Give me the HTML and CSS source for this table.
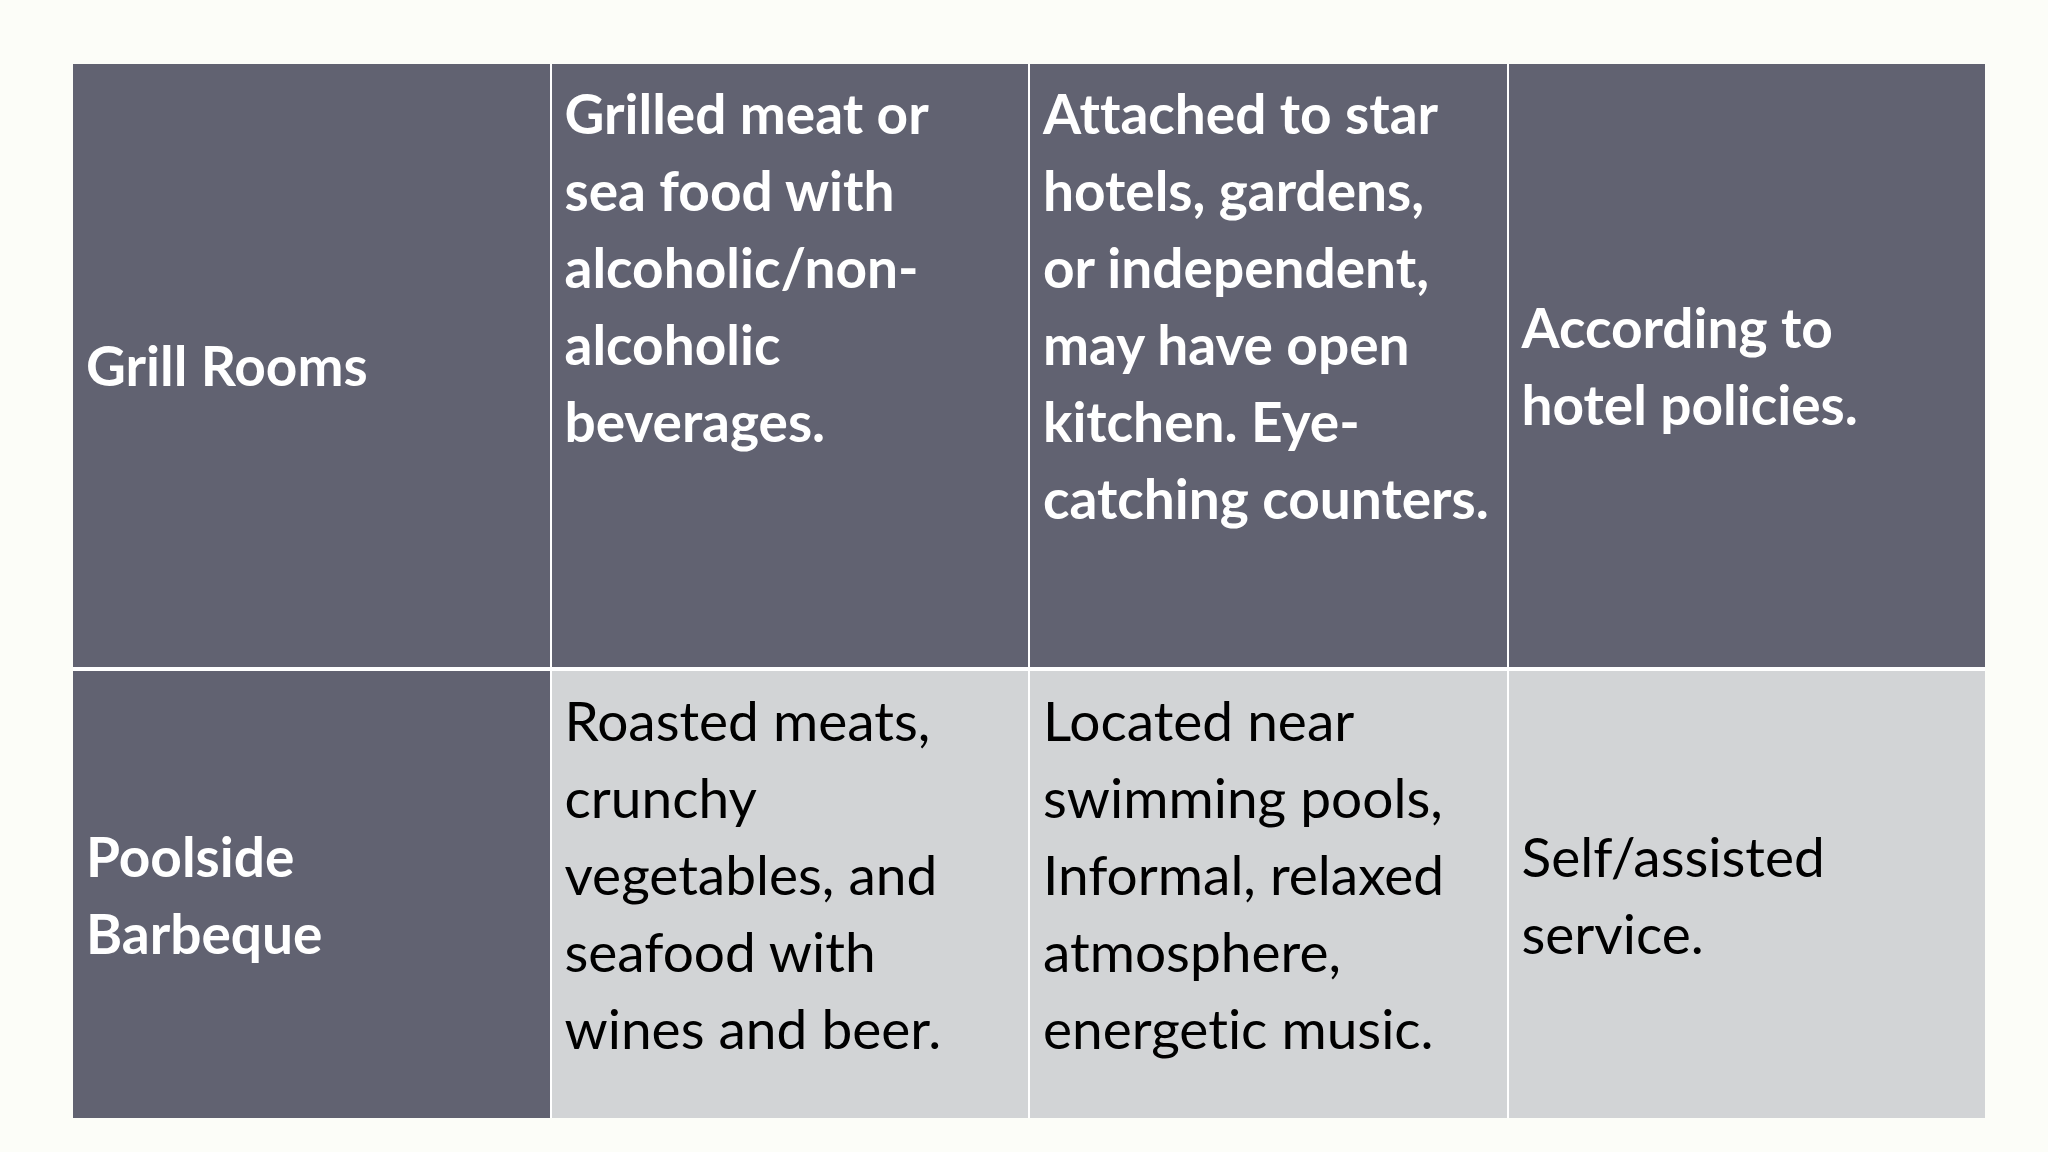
FILE: index.html
```html
<!DOCTYPE html>
<html>
<head>
<meta charset="utf-8">
<link rel="stylesheet" href="styles.css">
</head>
<body>
<div class="table">
  <div class="cell dark middle bold">Grill Rooms</div>
  <div class="cell dark bold">Grilled meat or<br>sea food with<br>alcoholic/non-<br>alcoholic<br>beverages.</div>
  <div class="cell dark bold">Attached to star<br>hotels, gardens,<br>or independent,<br>may have open<br>kitchen. Eye-<br>catching counters.</div>
  <div class="cell dark middle bold">According to<br>hotel policies.</div>

  <div class="cell dark middle bold">Poolside<br>Barbeque</div>
  <div class="cell light">Roasted meats,<br>crunchy<br>vegetables, and<br>seafood with<br>wines and beer.</div>
  <div class="cell light">Located near<br>swimming pools,<br>Informal, relaxed<br>atmosphere,<br>energetic music.</div>
  <div class="cell light middle">Self/assisted<br>service.</div>
</div>
</body>
</html>
```
FILE: styles.css
```css
html, body {
  margin: 0;
  padding: 0;
  background: #fcfdf8;
}
body {
  width: 2048px;
  height: 1152px;
  overflow: hidden;
  font-family: "Lato", "Open Sans", sans-serif;
  font-variant-ligatures: none;
}
.table {
  margin: 64px 0 0 73px;
  width: 1912px;
  display: grid;
  grid-template-columns: repeat(4, 1fr);
  grid-template-rows: 603px 447px;
  column-gap: 2px;
  row-gap: 4px;
  background: #ffffff;
}
.cell {
  display: flex;
  flex-direction: column;
  justify-content: flex-start;
  padding: 11px 10px 0 13px;
  font-size: 55px;
  line-height: 77px;
  white-space: nowrap;
  overflow: hidden;
}
.middle {
  justify-content: center;
  padding-top: 0;
}
.bold {
  font-weight: 700;
}
.dark {
  background: #616271;
  color: #ffffff;
}
.light {
  background: #d2d4d6;
  color: #000000;
}
```
